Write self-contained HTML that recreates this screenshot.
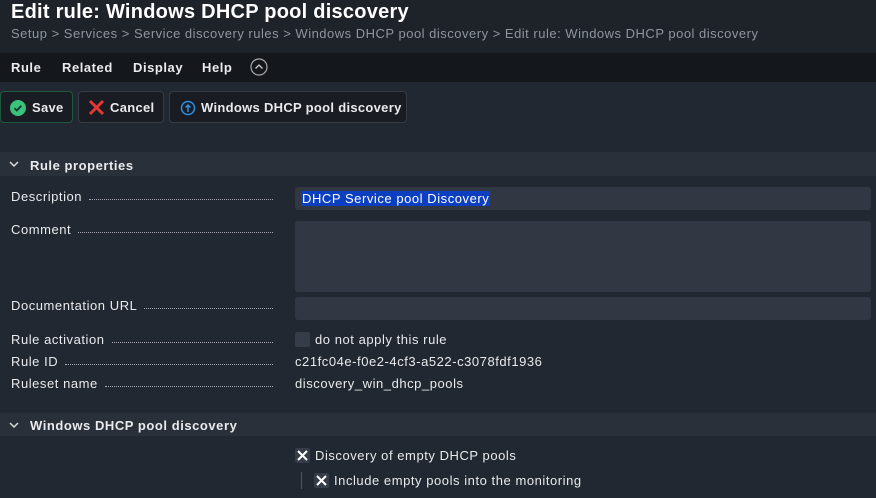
<html><head><style>
body{margin:0;width:876px;height:498px;background:#222831;font-family:"Liberation Sans",sans-serif;color:#e8eaed;font-size:13px;letter-spacing:0.55px;overflow:hidden;position:relative}
.a{position:absolute;white-space:nowrap}
.b{font-weight:bold}
.lab{position:absolute;left:11px;width:262px;display:flex;white-space:nowrap}
.lab i{flex:1;border-bottom:1px dotted #aab;height:10px;margin-left:7px}
.inp{position:absolute;background:#313844;border-radius:3px;left:295px;width:576px}
.btn{position:absolute;top:91px;height:32px;background:#191d23;border:1px solid #363c46;border-radius:4px;box-sizing:border-box;font-weight:bold;font-size:13px;letter-spacing:0.3px}
.cb{position:absolute;width:15px;height:15px;background:#363d49;border-radius:2px}
</style></head><body>
<div class="a" style="left:0;top:0;width:876px;height:53px;background:#1e232a"></div>
<div class="a b" style="left:11px;top:1px;font-size:20px;color:#fff;letter-spacing:0.25px">Edit rule: Windows DHCP pool discovery</div>
<div class="a" style="left:11px;top:26px;color:#8f959d;letter-spacing:0.5px">Setup &gt; Services &gt; Service discovery rules &gt; Windows DHCP pool discovery &gt; Edit rule: Windows DHCP pool discovery</div>
<div class="a" style="left:0;top:53px;width:876px;height:29px;background:#14171c"></div>
<div class="a b" style="left:11px;top:60px">Rule</div>
<div class="a b" style="left:62px;top:60px">Related</div>
<div class="a b" style="left:133px;top:60px">Display</div>
<div class="a b" style="left:202px;top:60px">Help</div>
<svg class="a" style="left:250px;top:58px" width="18" height="18"><circle cx="9" cy="9" r="8" fill="none" stroke="#aaa" stroke-width="1.2"/><path d="M5.5 10.5L9 7l3.5 3.5" fill="none" stroke="#ccc" stroke-width="1.3"/></svg>
<div class="btn" style="left:0;width:73px;border-color:#1f5a3c"><svg class="a" style="left:9px;top:8px" width="16" height="16"><circle cx="8" cy="8" r="8" fill="#3bc27a"/><path d="M4.5 8.2l2.3 2.3 4.5-4.8" fill="none" stroke="#133" stroke-width="1.8"/></svg><span class="a" style="left:31px;top:8px">Save</span></div>
<div class="btn" style="left:78px;width:86px"><svg class="a" style="left:9px;top:7px" width="17" height="17"><path d="M2 2L15 15M15 2L2 15" stroke="#e53935" stroke-width="3"/></svg><span class="a" style="left:31px;top:8px">Cancel</span></div>
<div class="btn" style="left:169px;width:238px"><svg class="a" style="left:10px;top:8px" width="16" height="16"><circle cx="8" cy="8" r="6.5" fill="none" stroke="#2e8ee0" stroke-width="1.5"/><path d="M8 12V5M5.5 7.5L8 5l2.5 2.5" fill="none" stroke="#2e8ee0" stroke-width="1.5"/></svg><span class="a" style="left:31px;top:8px">Windows DHCP pool discovery</span></div>
<div class="a" style="left:0;top:152px;width:876px;height:24px;background:#2a3039"></div>
<svg class="a" style="left:9px;top:161px" width="10" height="7"><path d="M1 1l4 4 4-4" fill="none" stroke="#ddd" stroke-width="1.5"/></svg>
<div class="a b" style="left:30px;top:158px">Rule properties</div>
<div class="lab" style="top:189px">Description<i></i></div>
<div class="inp" style="top:187px;height:23px"></div>
<div class="a" style="left:301px;top:191px;background:#0b3fc0;color:#fff;padding:0 1px">DHCP Service pool Discovery</div>
<div class="lab" style="top:222px">Comment<i></i></div>
<div class="inp" style="top:221px;height:71px"></div>
<div class="lab" style="top:298px">Documentation URL<i></i></div>
<div class="inp" style="top:297px;height:23px"></div>
<div class="lab" style="top:332px">Rule activation<i></i></div>
<div class="cb" style="left:295px;top:332px"></div>
<div class="a" style="left:315px;top:332px">do not apply this rule</div>
<div class="lab" style="top:354px">Rule ID<i></i></div>
<div class="a" style="left:295px;top:354px">c21fc04e-f0e2-4cf3-a522-c3078fdf1936</div>
<div class="lab" style="top:376px">Ruleset name<i></i></div>
<div class="a" style="left:295px;top:376px">discovery_win_dhcp_pools</div>
<div class="a" style="left:0;top:413px;width:876px;height:23px;background:#2a3039"></div>
<svg class="a" style="left:9px;top:422px" width="10" height="7"><path d="M1 1l4 4 4-4" fill="none" stroke="#ddd" stroke-width="1.5"/></svg>
<div class="a b" style="left:30px;top:418px">Windows DHCP pool discovery</div>
<div class="cb" style="left:295px;top:448px"></div><svg class="a" style="left:297px;top:450px" width="11" height="11"><path d="M1 1L10 10M10 1L1 10" stroke="#fff" stroke-width="2"/></svg>
<div class="a" style="left:315px;top:448px">Discovery of empty DHCP pools</div>
<div class="a" style="left:301px;top:472px;width:1px;height:17px;background:#555"></div>
<div class="cb" style="left:314px;top:473px"></div><svg class="a" style="left:316px;top:475px" width="11" height="11"><path d="M1 1L10 10M10 1L1 10" stroke="#fff" stroke-width="2"/></svg>
<div class="a" style="left:334px;top:473px">Include empty pools into the monitoring</div>
</body></html>
